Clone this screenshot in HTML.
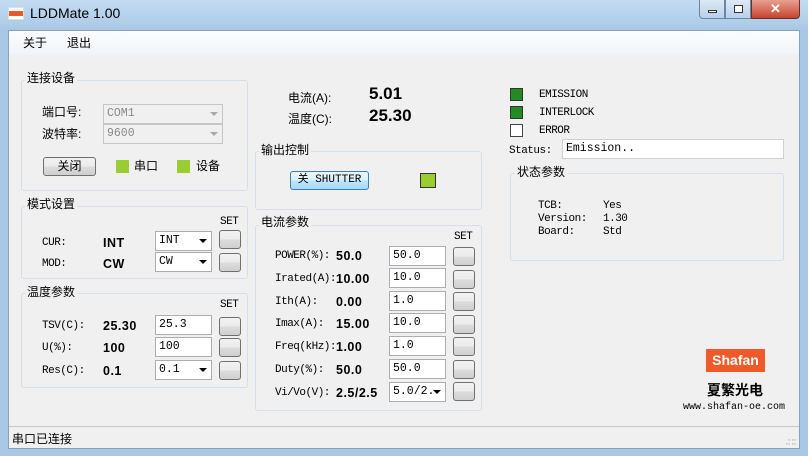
<!DOCTYPE html>
<html><head><meta charset="utf-8"><style>
*{margin:0;padding:0;box-sizing:border-box}
body{width:808px;height:456px;overflow:hidden;background:#a9c8e6;font-family:"Liberation Sans","Noto Sans CJK SC",sans-serif;font-size:12px;color:#000;position:relative}
.a{position:absolute}
.cn{font-family:"Liberation Sans","Noto Sans CJK SC",sans-serif;font-size:12px}
.m{font-family:"Liberation Mono","Noto Sans CJK SC",monospace;font-size:11px;letter-spacing:-0.5px;margin-top:2px}
.b{font-weight:bold;font-family:"Liberation Sans","Noto Sans CJK SC",sans-serif;font-size:12.5px;letter-spacing:0.5px;margin-top:2px}
.grp{position:absolute;border:1px solid #d5dfe5;border-radius:3px}
.gt{position:absolute;background:#f0f0f0;padding:0 2px;font-size:12px;line-height:14px}
.inp{position:absolute;background:#fff;border:1px solid #abadb3;height:20px;font-family:"Liberation Mono",monospace;font-size:11.5px;padding:1px 3px;line-height:16px}
.dis{background:#f0f0f0;border-color:#c5c5c5;color:#888}
.arr{position:absolute;right:4px;top:7px;width:0;height:0;border-left:4px solid transparent;border-right:4px solid transparent;border-top:4px solid #000}
.dis .arr{border-top-color:#aaa}
.btn{position:absolute;width:22px;height:19px;border:1px solid #707070;border-radius:3px;background:linear-gradient(#f2f2f2,#ebebeb 50%,#dddddd 50%,#cfcfcf)}
.sq{position:absolute;width:13px;height:13px}
</style></head><body>
<div class="a" style="left:0;top:0;width:808px;height:30px;background:linear-gradient(#c4dcf2,#a9c8e6)"></div>
<div class="a" style="left:8px;top:7px;width:16px;height:13px;background:#fff;border:1px solid #ddd"><div style="margin:3px 0;height:5px;background:#e85a2a"></div></div>
<div class="a" style="left:30px;top:5px;font-size:14px">LDDMate 1.00</div>
<div class="a" style="left:699px;top:0;width:26px;height:19px;border:1px solid #6a86a6;border-top:none;border-radius:0 0 0 4px;background:linear-gradient(#dde9f5,#b9d0e8)"><div style="position:absolute;left:8px;top:10px;width:9px;height:3px;border:1px solid #333;background:#fff"></div></div>
<div class="a" style="left:725px;top:0;width:26px;height:19px;border:1px solid #6a86a6;border-top:none;background:linear-gradient(#dde9f5,#b9d0e8)"><div style="position:absolute;left:8px;top:5px;width:9px;height:8px;border:1px solid #333;background:#fff"></div></div>
<div class="a" style="left:751px;top:0;width:49px;height:19px;border:1px solid #6a3030;border-top:none;border-radius:0 0 4px 0;background:linear-gradient(#e8a090,#c7432f);color:#fff;font-weight:bold;font-size:13px;text-align:center;line-height:17px">✕</div>
<div class="a" style="left:8px;top:30px;width:792px;height:419px;background:#f0f0f0;border:1px solid #8aa0b8"></div>
<div class="a" style="left:9px;top:31px;width:790px;height:24px;background:linear-gradient(#fbfcfd,#f0f4f8)"></div>
<div class="a cn" style="left:23px;top:34px">关于</div>
<div class="a cn" style="left:67px;top:34px">退出</div>

<div class="grp" style="left:21px;top:80px;width:227px;height:111px"></div>
<div class="gt" style="left:25px;top:71px">连接设备</div>
<div class="a cn" style="left:42px;top:103px">端口号:</div>
<div class="a cn" style="left:42px;top:125px">波特率:</div>
<div class="inp dis" style="left:103px;top:104px;width:120px">COM1<div class="arr"></div></div>
<div class="inp dis" style="left:103px;top:124px;width:120px">9600<div class="arr"></div></div>
<div class="a" style="left:43px;top:157px;width:53px;height:19px;border:1px solid #707070;border-radius:3px;background:linear-gradient(#f2f2f2,#ebebeb 50%,#dddddd 50%,#cfcfcf);text-align:center;line-height:16px">关闭</div>
<div class="sq" style="left:116px;top:160px;background:#9acd32"></div>
<div class="a cn" style="left:134px;top:157px">串口</div>
<div class="sq" style="left:177px;top:160px;background:#9acd32"></div>
<div class="a cn" style="left:196px;top:157px">设备</div>

<div class="grp" style="left:21px;top:206px;width:227px;height:73px"></div>
<div class="gt" style="left:25px;top:197px">模式设置</div>
<div class="a m" style="left:220px;top:214px">SET</div>
<div class="a m" style="left:42px;top:235px">CUR:</div>
<div class="a b" style="left:103px;top:234px">INT</div>
<div class="inp" style="left:155px;top:231px;width:57px">INT<div class="arr"></div></div>
<div class="btn" style="left:219px;top:230px"></div>
<div class="a m" style="left:42px;top:256px">MOD:</div>
<div class="a b" style="left:103px;top:255px">CW</div>
<div class="inp" style="left:155px;top:252px;width:57px">CW<div class="arr"></div></div>
<div class="btn" style="left:219px;top:253px"></div>

<div class="grp" style="left:21px;top:293px;width:227px;height:95px"></div>
<div class="gt" style="left:25px;top:285px">温度参数</div>
<div class="a m" style="left:220px;top:297px">SET</div>
<div class="a m" style="left:42px;top:318px">TSV(C):</div>
<div class="a b" style="left:103px;top:317px">25.30</div>
<div class="inp" style="left:155px;top:315px;width:57px">25.3</div>
<div class="btn" style="left:219px;top:317px"></div>
<div class="a m" style="left:42px;top:340px">U(%):</div>
<div class="a b" style="left:103px;top:339px">100</div>
<div class="inp" style="left:155px;top:337px;width:57px">100</div>
<div class="btn" style="left:219px;top:338px"></div>
<div class="a m" style="left:42px;top:363px">Res(C):</div>
<div class="a b" style="left:103px;top:362px">0.1</div>
<div class="inp" style="left:155px;top:360px;width:57px">0.1<div class="arr"></div></div>
<div class="btn" style="left:219px;top:361px"></div>

<div class="a cn" style="left:288px;top:89px">电流(A):</div>
<div class="a cn" style="left:288px;top:110px">温度(C):</div>
<div class="a" style="left:369px;top:84px;font-weight:bold;font-size:17px">5.01</div>
<div class="a" style="left:369px;top:106px;font-weight:bold;font-size:17px">25.30</div>

<div class="grp" style="left:255px;top:151px;width:227px;height:59px"></div>
<div class="gt" style="left:259px;top:143px">输出控制</div>
<div class="a" style="left:290px;top:171px;width:79px;height:19px;border:1px solid #3c7fb1;border-radius:3px;background:linear-gradient(#eaf6fd,#d9f0fc 50%,#bee6fd 50%,#a7d9f5);text-align:center;line-height:16px;font-family:'Liberation Mono','Noto Sans CJK SC',monospace;font-size:11px">关 SHUTTER</div>
<div class="a" style="left:420px;top:173px;width:16px;height:15px;background:#9acd32;border:1px solid #333"></div>

<div class="grp" style="left:255px;top:225px;width:227px;height:186px"></div>
<div class="gt" style="left:259px;top:215px">电流参数</div>
<div class="a m" style="left:454px;top:229px">SET</div>
<div class="a m" style="left:275px;top:248px">POWER(%):</div><div class="a b" style="left:336px;top:247px">50.0</div><div class="inp" style="left:389px;top:246px;width:57px">50.0</div><div class="btn" style="left:453px;top:247px"></div>
<div class="a m" style="left:275px;top:271px">Irated(A):</div><div class="a b" style="left:336px;top:270px">10.00</div><div class="inp" style="left:389px;top:268px;width:57px">10.0</div><div class="btn" style="left:453px;top:270px"></div>
<div class="a m" style="left:275px;top:294px">Ith(A):</div><div class="a b" style="left:336px;top:293px">0.00</div><div class="inp" style="left:389px;top:291px;width:57px">1.0</div><div class="btn" style="left:453px;top:292px"></div>
<div class="a m" style="left:275px;top:316px">Imax(A):</div><div class="a b" style="left:336px;top:315px">15.00</div><div class="inp" style="left:389px;top:313px;width:57px">10.0</div><div class="btn" style="left:453px;top:315px"></div>
<div class="a m" style="left:275px;top:339px">Freq(kHz):</div><div class="a b" style="left:336px;top:338px">1.00</div><div class="inp" style="left:389px;top:336px;width:57px">1.0</div><div class="btn" style="left:453px;top:337px"></div>
<div class="a m" style="left:275px;top:362px">Duty(%):</div><div class="a b" style="left:336px;top:361px">50.0</div><div class="inp" style="left:389px;top:359px;width:57px">50.0</div><div class="btn" style="left:453px;top:360px"></div>
<div class="a m" style="left:275px;top:385px">Vi/Vo(V):</div><div class="a b" style="left:336px;top:384px">2.5/2.5</div><div class="inp" style="left:389px;top:382px;width:57px">5.0/2.<div class="arr"></div></div><div class="btn" style="left:453px;top:382px"></div>

<div class="sq" style="left:510px;top:88px;background:#228b22;border:1px solid #333"></div>
<div class="a m" style="left:539px;top:87px">EMISSION</div>
<div class="sq" style="left:510px;top:106px;background:#228b22;border:1px solid #333"></div>
<div class="a m" style="left:539px;top:105px">INTERLOCK</div>
<div class="sq" style="left:510px;top:124px;background:#fff;border:1px solid #444"></div>
<div class="a m" style="left:539px;top:123px">ERROR</div>
<div class="a m" style="left:509px;top:143px">Status:</div>
<div class="inp" style="left:562px;top:139px;width:222px;height:20px;border-color:#d0d0d0">Emission..</div>
<div class="grp" style="left:510px;top:173px;width:274px;height:88px"></div>
<div class="gt" style="left:515px;top:165px">状态参数</div>
<div class="a m" style="left:538px;top:198px;line-height:13px">TCB:<br>Version:<br>Board:</div>
<div class="a m" style="left:603px;top:198px;line-height:13px">Yes<br>1.30<br>Std</div>

<div class="a" style="left:706px;top:349px;width:59px;height:23px;background:#f05a28;color:#fff;font-weight:bold;font-size:14px;text-align:center;line-height:23px">Shafan</div>
<div class="a" style="left:707px;top:381px;font-weight:bold;font-size:14px;font-family:'Noto Sans CJK SC',sans-serif;line-height:18px">夏繁光电</div>
<div class="a m" style="left:683px;top:400px;font-size:10px;letter-spacing:0">www.shafan-oe.com</div>

<div class="a" style="left:9px;top:426px;width:790px;height:22px;background:#f0f0f0;border-top:1px solid #c8c8c8"></div>
<div class="a cn" style="left:12px;top:430px">串口已连接</div>
<div class="a" style="left:785px;top:437px;color:#aaa;font-size:8px;line-height:4px">⠠⠤<br>⠤⠤</div>
</body></html>
